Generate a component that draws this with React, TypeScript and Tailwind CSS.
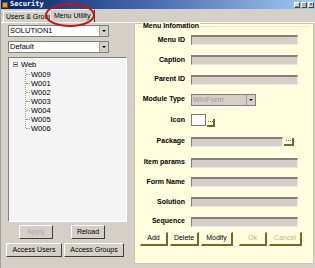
import React from 'react';

const font = { fontFamily: '"Liberation Sans", "DejaVu Sans", sans-serif' };

function Combo({ text, w, disabled }: { text: string; w: string; disabled?: boolean }) {
  return (
    <div className={`${w} h-[12px] flex items-center border border-[#7f7f7f] ${disabled ? 'bg-[#d4d0c8]' : 'bg-white'}`}>
      <span className={`flex-1 pl-[1px] text-[7.5px] leading-none ${disabled ? 'text-[#9a9a9a]' : 'text-black'}`}>{text}</span>
      <div className="w-[9px] h-[10px] bg-[#d4d0c8] border-l border-[#a0a0a0] flex items-center justify-center">
        <div className="w-0 h-0 border-l-[2px] border-r-[2px] border-t-[2px] border-l-transparent border-r-transparent border-t-black" />
      </div>
    </div>
  );
}

function WinButton({ label, w, disabled }: { label: string; w: string; disabled?: boolean }) {
  return (
    <div className={`${w} h-[14px] flex items-center justify-center bg-[#d4d0c8] border border-t-white border-l-white border-r-[#404040] border-b-[#404040] text-[7px] ${disabled ? 'text-[#a8a8a8]' : 'text-black'}`}>
      {label}
    </div>
  );
}

function YButton({ label, w, disabled }: { label: string; w: string; disabled?: boolean }) {
  return (
    <div className={`${w} h-[14px] flex items-center justify-center bg-[#ffffe0] border-r-2 border-b-2 border-r-[#6b6b2a] border-b-[#6b6b2a] border-l border-t border-l-[#ffffe0] border-t-[#ffffe0] text-[7px] ${disabled ? 'text-[#b8b880]' : 'text-black'}`}>
      {label}
    </div>
  );
}

function Field({ w = 'w-[107px]' }: { w?: string }) {
  return <div className={`${w} h-[10px] bg-[#d4d0c8] border-t-2 border-l border-[#808080] border-r-[#e8e8e8] border-b-[#e8e8e8] border-r border-b`} />;
}

function Dots({ w }: { w: string }) {
  return (
    <div className={`${w} h-[8px] bg-[#ffffe0] border-r-2 border-b-2 border-[#6b6b2a] flex items-center justify-center gap-[1px]`}>
      <div className="w-px h-px bg-[#666]" />
      <div className="w-px h-px bg-[#666]" />
      <div className="w-px h-px bg-[#666]" />
    </div>
  );
}

function Row({ label, h, children }: { label: string; h: string; children?: React.ReactNode }) {
  return (
    <div className={`${h} flex items-center`}>
      <div className="w-[50px] text-right text-[7px] font-bold text-black whitespace-nowrap">{label}</div>
      <div className="ml-[6px] flex items-center">{children}</div>
    </div>
  );
}

export default function App() {
  const items = ['W009', 'W001', 'W002', 'W003', 'W004', 'W005', 'W006'];
  return (
    <div className="relative w-[315px] h-[268px] bg-[#d4d0c8] overflow-hidden border-l border-[#a0a0a0]" style={font}>
      {/* title bar */}
      <div className="h-[9px] flex items-center bg-gradient-to-r from-[#0a246a] via-[#4a6fb0] to-[#a6caf0] pl-[1px]">
        <div className="w-[6px] h-[6px] bg-[#e0a030] border border-[#805010]" />
        <span className="ml-[2px] text-[7px] font-bold text-white leading-none" style={{ fontFamily: '"DejaVu Sans Mono", monospace' }}>Security</span>
        <div className="ml-auto mr-[1px] flex gap-[1px]">
          {['_', '□', '×'].map((c) => (
            <div key={c} className="w-[6px] h-[6px] bg-[#d4d0c8] border border-t-white border-l-white border-r-[#404040] border-b-[#404040] text-[5px] leading-none flex items-center justify-center text-black">{c}</div>
          ))}
        </div>
      </div>
      {/* tabs */}
      <div className="h-[13px] flex items-end pl-[2px] bg-[#d4d0c8]">
        <div className="w-[47px] h-[11px] pl-[2px] overflow-hidden whitespace-nowrap flex items-center text-[7px] text-black border-t border-l border-white">Users &amp; Groups</div>
        <div className="h-[13px] px-[3px] whitespace-nowrap flex items-center text-[7px] text-black border-t border-l border-white border-r border-r-[#404040] bg-[#d4d0c8]">Menu Utility</div>
      </div>
      {/* content */}
      <div className="flex h-[240px] border-t border-white">
        {/* left */}
        <div className="w-[133px] flex flex-col">
          <div className="ml-[7px] mt-[2px]"><Combo text="SOLUTION1" w="w-[101px]" /></div>
          <div className="ml-[7px] mt-[4px]"><Combo text="Default" w="w-[101px]" /></div>
          <div className="ml-[7px] mt-[4px] w-[119px] h-[165px] bg-[#f4f4f4] border border-t-[#808080] border-l-[#808080] border-r-white border-b-white pt-[2px] pl-[4px]">
            <div className="flex items-center h-[9px]">
              <div className="w-[5px] h-[5px] border border-[#999] bg-white flex items-center justify-center">
                <div className="w-[3px] h-px bg-[#333]" />
              </div>
              <span className="ml-[3px] text-[7.5px] text-black leading-none">Web</span>
            </div>
            <div className="ml-[12px] border-l border-dotted border-[#999] h-[59px] pt-[1px]">
              {items.map((t) => (
                <div key={t} className="flex items-center h-[9px]">
                  <div className="w-[4px] border-t border-dotted border-[#999]" />
                  <span className="ml-[1px] text-[7.5px] text-black leading-none">{t}</span>
                </div>
              ))}
            </div>
          </div>
          <div className="mt-[3px] flex">
            <div className="ml-[18px]"><WinButton label="Apply" w="w-[34px]" disabled /></div>
            <div className="ml-[18px]"><WinButton label="Reload" w="w-[34px]" /></div>
          </div>
          <div className="mt-[4px] flex gap-[2px] ml-[5px]">
            <WinButton label="Access Users" w="w-[56px]" />
            <WinButton label="Access Groups" w="w-[60px]" />
          </div>
        </div>
        {/* right */}
        <div className="w-[180px] h-[241px] bg-[#ffffe0] border border-[#c8c8a0]">
          <div className="mx-[3px] mt-[2px] h-[236px] border-t border-[#f0e8b0] relative">
            <span className="absolute -top-[5px] left-[4px] bg-[#ffffe0] px-[1px] text-[7px] font-bold text-black leading-none">Menu Infomation</span>
          </div>
          <div className="-mt-[232px] flex flex-col">
            <Row label="Menu ID" h="h-[20px]"><Field /></Row>
            <Row label="Caption" h="h-[20px]"><Field /></Row>
            <Row label="Parent ID" h="h-[19px]"><Field /></Row>
            <Row label="Module Type" h="h-[21px]"><Combo text="WinForm" w="w-[65px]" disabled /></Row>
            <Row label="Icon" h="h-[20px]">
              <div className="w-[15px] h-[12px] bg-white border border-[#808060]" />
              <div className="ml-[1px] mt-[5px]"><Dots w="w-[8px]" /></div>
            </Row>
            <Row label="Package" h="h-[23px]">
              <Field w="w-[92px]" />
              <div className="ml-[1px]"><Dots w="w-[10px]" /></div>
            </Row>
            <Row label="Item params" h="h-[19px]"><Field /></Row>
            <Row label="Form Name" h="h-[20px]"><Field /></Row>
            <Row label="Solution" h="h-[20px]"><Field /></Row>
            <Row label="Sequence" h="h-[19px]"><Field /></Row>
            <div className="mt-[1px] ml-[5px] flex gap-[2px]">
              <YButton label="Add" w="w-[28px]" />
              <YButton label="Delete" w="w-[29px]" />
              <YButton label="Modify" w="w-[32px]" />
              <div className="w-[2px]" />
              <YButton label="Ok" w="w-[28px]" disabled />
              <YButton label="Cancel" w="w-[33px]" disabled />
            </div>
          </div>
        </div>
      </div>
      {/* annotation ellipse */}
      <div className="absolute left-[44px] top-[3px] w-[50px] h-[24px] rounded-[50%] border-2 border-[#cc1010]" />
    </div>
  );
}
